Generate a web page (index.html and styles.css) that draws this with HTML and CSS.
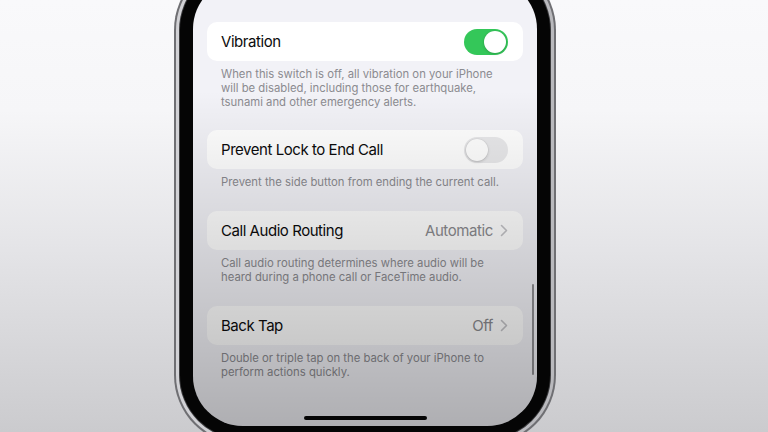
FILE: index.html
```html
<!DOCTYPE html>
<html lang="en">
<head>
<meta charset="utf-8">
<title>Accessibility Settings</title>
<link rel="stylesheet" href="styles.css">
</head>
<body>
<div class="stage">
  <div class="phone">
    <div class="phone-rim">
      <div class="phone-edge">
        <div class="bezel">
          <div class="screen">
            <div class="content">
              <section class="group">
                <div class="card">
                  <span class="label">Vibration</span>
                  <span class="switch on"><span class="knob"></span></span>
                </div>
                <p class="footer">When this switch is off, all vibration on your iPhone will be disabled, including those for earthquake, tsunami and other emergency alerts.</p>
              </section>
              <section class="group">
                <div class="card">
                  <span class="label">Prevent Lock to End Call</span>
                  <span class="switch off"><span class="knob"></span></span>
                </div>
                <p class="footer">Prevent the side button from ending the current call.</p>
              </section>
              <section class="group">
                <div class="card">
                  <span class="label">Call Audio Routing</span>
                  <span class="value">Automatic<svg class="chev" viewBox="0 0 8 13" width="8" height="13"><path d="M1.5 1.5 L6.5 6.5 L1.5 11.5" fill="none" stroke="currentColor" stroke-width="1.6" stroke-linecap="round" stroke-linejoin="round"/></svg></span>
                </div>
                <p class="footer">Call audio routing determines where audio will be heard during a phone call or FaceTime audio.</p>
              </section>
              <section class="group">
                <div class="card">
                  <span class="label">Back Tap</span>
                  <span class="value">Off<svg class="chev" viewBox="0 0 8 13" width="8" height="13"><path d="M1.5 1.5 L6.5 6.5 L1.5 11.5" fill="none" stroke="currentColor" stroke-width="1.6" stroke-linecap="round" stroke-linejoin="round"/></svg></span>
                </div>
                <p class="footer">Double or triple tap on the back of your iPhone to perform actions quickly.</p>
              </section>
            </div>
            <div class="scrollbar"></div>
            <div class="shade"></div>
            <div class="home-indicator"></div>
          </div>
        </div>
      </div>
    </div>
  </div>
</div>
</body>
</html>
```
FILE: styles.css
```css
html, body {
  margin: 0;
  padding: 0;
}
body {
  width: 768px;
  height: 432px;
  overflow: hidden;
  background: linear-gradient(to bottom, #f9f9fb 0px, #f6f6f8 110px, #e4e4e7 250px, #cbcbce 432px);
  font-family: Inter, "Noto Sans", "Liberation Sans", sans-serif;
}
.stage {
  height: 432px;
  display: flex;
  justify-content: center;
  align-items: flex-start;
}
.phone {
  width: 382px;
  height: 485px;
  margin-top: -40px;
  margin-right: 38px;
  padding: 2px;
  box-sizing: border-box;
  border-radius: 70px;
  background: #6f6f73;
}
.phone-rim {
  height: 100%;
  padding: 3px;
  box-sizing: border-box;
  border-radius: 68px;
  background: linear-gradient(to right, #d2d2d6, #b9b9bd);
}
.phone-edge {
  height: 100%;
  padding: 1px;
  box-sizing: border-box;
  border-radius: 65px;
  background: #3a3a3c;
}
.bezel {
  height: 100%;
  padding: 13px;
  box-sizing: border-box;
  border-radius: 64px;
  background: #050505;
}
.screen {
  position: relative;
  height: 100%;
  border-radius: 50px;
  overflow: hidden;
  background: #f2f2f7;
}
.content {
  padding: 43px 14px 0;
  display: flex;
  flex-direction: column;
  gap: 21px;
}
.group {
  margin: 0;
}
.card {
  height: 39px;
  background: #ffffff;
  border-radius: 10px;
  display: flex;
  align-items: center;
  justify-content: space-between;
  padding: 0 15px 0 14px;
}
.label {
  font-size: 15px;
  color: #0b0b0c;
  letter-spacing: -0.45px;
}
.value {
  display: flex;
  align-items: center;
  gap: 7px;
  font-size: 15px;
  letter-spacing: -0.4px;
  color: #8a8a8e;
}
.chev {
  color: #c2c2c6;
  display: block;
}
.footer {
  margin: 7px 0 0;
  padding: 0 12px 0 14px;
  font-size: 11.3px;
  letter-spacing: 0;
  line-height: 13.8px;
  color: #8b8b90;
}
.switch {
  position: relative;
  width: 44px;
  height: 26px;
  border-radius: 13px;
  display: block;
}
.switch.on {
  background: #34c759;
}
.switch.off {
  background: #e9e9eb;
}
.knob {
  position: absolute;
  top: 2px;
  width: 22px;
  height: 22px;
  border-radius: 50%;
  background: #ffffff;
  box-shadow: 0 1px 3px rgba(0,0,0,0.18), 0 0 0 0.5px rgba(0,0,0,0.05);
}
.switch.on .knob {
  right: 2px;
}
.switch.off .knob {
  left: 2px;
}
.scrollbar {
  position: absolute;
  right: 3px;
  top: 305px;
  width: 2.5px;
  height: 91px;
  border-radius: 2px;
  background: #8f8f93;
}
.shade {
  position: absolute;
  inset: 0;
  pointer-events: none;
  background: linear-gradient(to bottom, rgba(0,0,0,0) 0%, rgba(0,0,0,0) 25%, rgba(0,0,0,0.28) 100%);
}
.home-indicator {
  position: absolute;
  left: 111px;
  bottom: 6px;
  width: 123px;
  height: 4px;
  border-radius: 2px;
  background: #050505;
}
```
